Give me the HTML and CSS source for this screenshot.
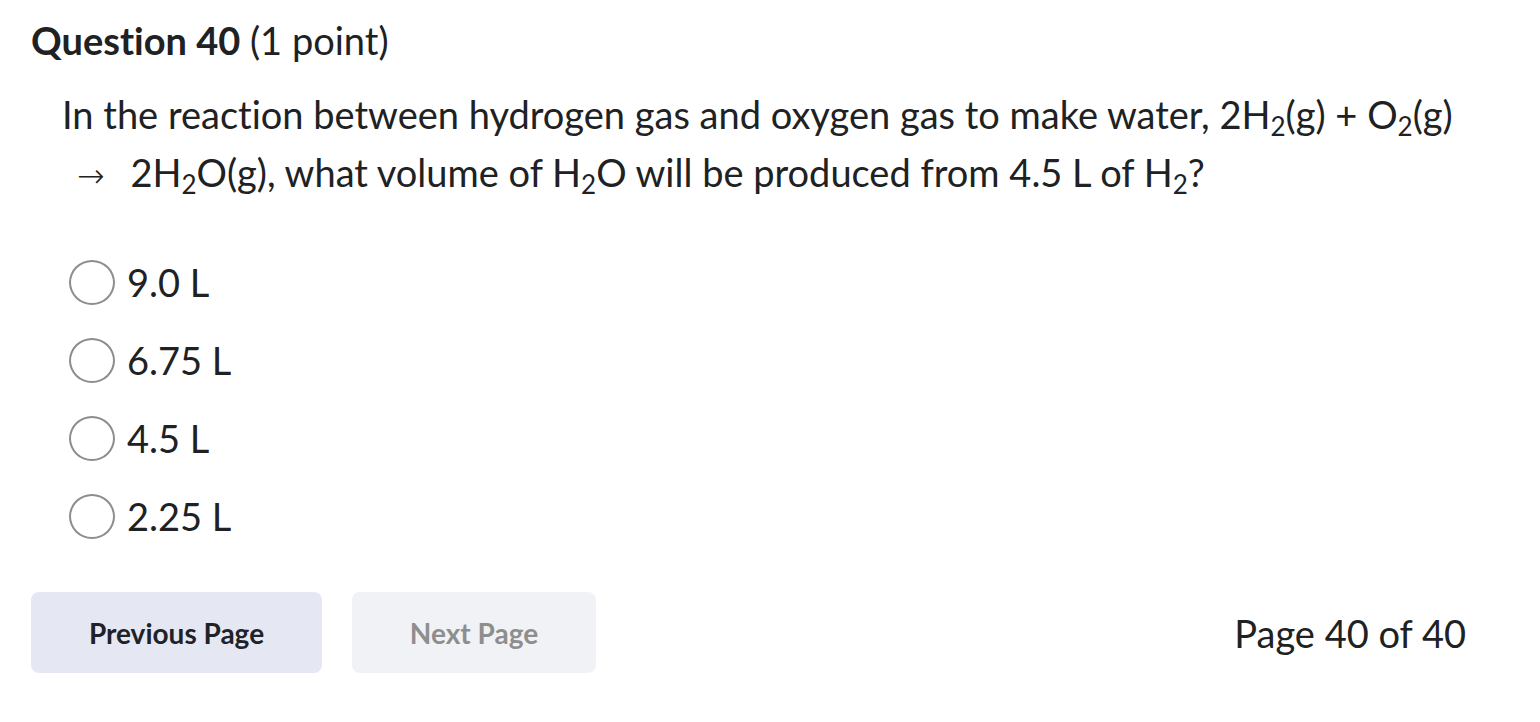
FILE: index.html
```html
<!DOCTYPE html>
<html lang="en">
  <head>
    <meta charset="UTF-8" />
    <meta name="viewport" content="width=device-width, initial-scale=1.0" />
    <title>Question 40</title>
    <link rel="stylesheet" href="styles.css">
  </head>
  <body>
    <!-- start question -->
    <div class="question">
      <h2 class="question-title"><b>Question 40</b> (1 point)</h2>
      <p class="question-text">
        In the reaction between hydrogen gas and oxygen gas to make water, 2H<sub>2</sub>(g) + O<sub>2</sub>(g)
        <span class="arrow">→</span> 2H<sub>2</sub>O(g), what volume of H<sub>2</sub>O will be produced from 4.5 L of H<sub>2</sub>?
      </p>
      <div class="choices">
        <label class="choice"><span class="radio"></span>9.0 L</label>
        <label class="choice"><span class="radio"></span>6.75 L</label>
        <label class="choice"><span class="radio"></span>4.5 L</label>
        <label class="choice"><span class="radio"></span>2.25 L</label>
      </div>
    </div>
    <!-- end question -->

    <!-- start pager -->
    <div class="pager">
      <button class="page-btn prev-btn">Previous Page</button>
      <button class="page-btn next-btn" disabled>Next Page</button>
      <span class="page-count">Page 40 of 40</span>
    </div>
    <!-- end pager -->
  </body>
</html>
```

FILE: styles.css
```css
body {
  margin: 0;
  padding: 18px 74px 0 31px;
  background-color: white;
  color: #202122;
  font-family: Lato, "Open Sans", sans-serif;
  font-variant-ligatures: none;
}
.question-title {
  margin: 0;
  font-size: 38px;
  font-weight: normal;
  line-height: 44px;
}
.question-title b {
  font-weight: bold;
}
.question-text {
  margin: 23px 0 0 31px;
  font-size: 38px;
  line-height: 58px;
}
.question-text sub {
  font-size: 26px;
  line-height: 0;
  vertical-align: -7px;
}
.arrow {
  margin: 0 16px 0 15px;
  font-family: "DejaVu Sans", sans-serif;
  font-size: 33px;
  font-weight: 300;
  line-height: 0;
}
.choices {
  margin: 59px 0 0 38px;
  display: flex;
  flex-direction: column;
  gap: 33px;
}
.choice {
  display: flex;
  align-items: center;
  gap: 12px;
  font-size: 38px;
  line-height: 45px;
}
.radio {
  box-sizing: border-box;
  width: 46px;
  height: 45px;
  border: 2px solid #8d8d8d;
  border-radius: 50%;
  background-color: white;
}
.pager {
  margin-top: 53px;
  display: flex;
  align-items: center;
  gap: 30px;
}
.page-btn {
  height: 81px;
  border: none;
  border-radius: 8px;
  font-family: Lato, sans-serif;
  font-weight: bold;
  font-size: 28px;
}
.prev-btn {
  width: 291px;
  background-color: #e5e8f3;
  color: #1f2228;
  cursor: pointer;
}
.next-btn {
  width: 244px;
  background-color: #f1f2f6;
  color: #8e8e8e;
}
.page-count {
  margin-left: auto;
  font-size: 38px;
}
```
